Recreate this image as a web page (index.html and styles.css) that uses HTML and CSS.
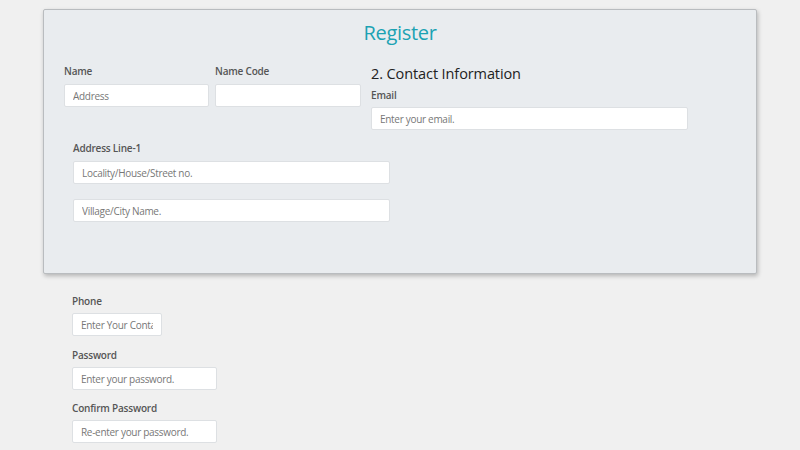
FILE: index.html
```html
<!DOCTYPE html>
<html>
<head>
<meta charset="utf-8">
<link rel="stylesheet" href="styles.css">
</head>
<body>
<div class="panel">
  <h1 class="title">Register</h1>
  <div class="top-row">
    <div class="field name-field">
      <label class="lbl">Name</label>
      <input class="inp" type="text" placeholder="Address">
    </div>
    <div class="field code-field">
      <label class="lbl">Name Code</label>
      <input class="inp" type="text">
    </div>
    <div class="contact">
      <h2 class="section">2. Contact Information</h2>
      <label class="lbl email-lbl">Email</label>
      <input class="inp wide" type="text" placeholder="Enter your email.">
    </div>
  </div>
  <div class="address">
    <label class="lbl">Address Line-1</label>
    <input class="inp wide" type="text" placeholder="Locality/House/Street no.">
    <input class="inp wide second" type="text" placeholder="Village/City Name.">
  </div>
</div>
<div class="outside">
  <label class="lbl">Phone</label>
  <input class="inp phone" type="text" placeholder="Enter Your Contact Number">
  <label class="lbl">Password</label>
  <input class="inp pw" type="password" placeholder="Enter your password.">
  <label class="lbl">Confirm Password</label>
  <input class="inp pw" type="password" placeholder="Re-enter your password.">
</div>
</body>
</html>
```
FILE: styles.css
```css
* { box-sizing: border-box; }
html, body { margin: 0; padding: 0; }
body {
  background: #f0f0f0;
  font-family: "Open Sans", "Noto Sans", sans-serif;
  color: #333;
  width: 800px;
  height: 450px;
  overflow: hidden;
}
.panel {
  margin: 9px 0 0 43px;
  width: 714px;
  height: 265px;
  background: #e9ecef;
  border: 1px solid #b9bcbf;
  border-radius: 2px;
  box-shadow: 1px 2px 4px rgba(0,0,0,0.25);
  padding: 10px 0 0 20px;
}
.title {
  margin: 0 0 0 -20px;
  text-align: center;
  font-size: 20px;
  line-height: 26px;
  font-weight: 400;
  color: #1ba2b3;
  height: 27px;
  letter-spacing: -0.3px;
}
.top-row {
  display: flex;
  margin-top: 17px;
}
.field { display: flex; flex-direction: column; }
.name-field { width: 145px; margin-right: 6px; }
.code-field { width: 146px; margin-right: 10px; }
.lbl {
  display: block;
  font-size: 10px;
  line-height: 14px;
  font-weight: 600;
  color: #555;
  letter-spacing: -0.2px;
}
.field .lbl { margin-bottom: 6px; }
.inp {
  display: block;
  height: 23px;
  border: 1px solid #dde0e3;
  border-radius: 2px;
  background: #fff;
  padding: 0 8px;
  font-family: inherit;
  font-size: 10px;
  color: #555;
  outline: none;
  letter-spacing: -0.3px;
}
.inp::placeholder { color: #777; }
.field .inp { width: 100%; }
.contact { display: flex; flex-direction: column; }
.section {
  margin: 0;
  font-size: 14.5px;
  line-height: 20px;
  font-weight: 400;
  color: #222;
  letter-spacing: -0.1px;
}
.email-lbl { margin-top: 4px; margin-bottom: 5px; }
.wide { width: 317px; }
.address { margin: 11px 0 0 9px; }
.address .lbl { margin-bottom: 6px; }
.second { margin-top: 15px; }
.outside { margin: 20px 0 0 72px; }
.outside .lbl { margin-bottom: 5px; }
.phone { width: 90px; margin-bottom: 12px; }
.pw { width: 145px; margin-bottom: 11px; }
```
